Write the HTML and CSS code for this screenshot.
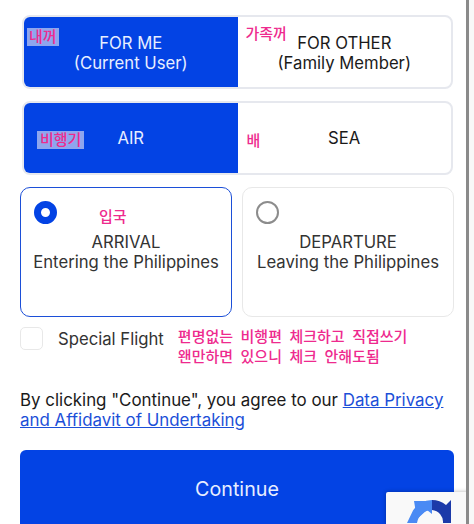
FILE: index.html
```html
<!DOCTYPE html>
<html lang="en">
<head>
    <meta charset="UTF-8">
    <meta name="viewport" content="width=device-width, initial-scale=1.0">
    <title>Registration</title>
    <link rel="stylesheet" href="styles.css">
</head>
<body>
    <div class="container">
        <div class="toggle">
            <div class="toggle-item active">
                <span class="note note-me">내꺼</span>
                FOR ME<br>(Current User)
            </div>
            <div class="toggle-item">
                <span class="note note-other">가족꺼</span>
                FOR OTHER<br>(Family Member)
            </div>
        </div>
        <div class="toggle">
            <div class="toggle-item active">
                <span class="note note-air">비행기</span>
                AIR
            </div>
            <div class="toggle-item">
                <span class="note note-sea">배</span>
                SEA
            </div>
        </div>
        <div class="cards">
            <div class="card selected">
                <span class="radio on"></span>
                <span class="note note-in">입국</span>
                <p>ARRIVAL<br>Entering the Philippines</p>
            </div>
            <div class="card">
                <span class="radio"></span>
                <p>DEPARTURE<br>Leaving the Philippines</p>
            </div>
        </div>
        <div class="special">
            <span class="checkbox"></span>
            <span class="special-label">Special Flight</span>
            <span class="note-flight">편명없는 비행편 체크하고 직접쓰기<br>왠만하면 있으니 체크 안해도됨</span>
        </div>
        <p class="agree">By clicking "Continue", you agree to our <a href="#">Data Privacy and Affidavit of Undertaking</a></p>
        <button class="continue">Continue</button>
    </div>
    <div class="recaptcha">
        <svg width="60" height="31" viewBox="0 0 60 31">
            <path d="M30 8a23 23 0 0 0-19 10.500L5 31h10a15 15 0 0 1 15-13z" fill="#4a8af4"/>
            <path d="M12 9h18v13L25 18l-10 9z" fill="#4a8af4"/>
            <path d="M30 8a23 23 0 0 1 14 5l5-5v23H41a12 12 0 0 0-11-13z" fill="#1c3aa9"/>
        </svg>
    </div>
    <div class="scrollbar"></div>
</body>
</html>
```

FILE: styles.css
```css
html, body {
    height: 100%;
}
body {
    font-family: Inter, "Noto Sans CJK KR", sans-serif;
    margin: 0;
    background-color: #fff;
    color: #222;
    overflow: hidden;
}
.container {
    width: 434px;
    padding: 15px 0 0 20px;
}
.scrollbar {
    position: absolute;
    top: 0;
    right: 0;
    bottom: 0;
    width: 5px;
    background-color: #f8f8f8;
    border-left: 3px solid #8a8a8a;
}
.toggle {
    display: flex;
    height: 74px;
    margin: 0 1px 12px 2px;
    box-sizing: border-box;
    border: 2px solid #e6e8ee;
    border-radius: 8px;
    overflow: hidden;
}
.toggle-item {
    position: relative;
    flex: 1;
    text-align: center;
    font-size: 16.7px;
    line-height: 20px;
    color: #1a1a1a;
    padding-top: 16px;
}
.toggle-item.active {
    background-color: #0343e4;
    color: #e8eeff;
}
.toggle + .toggle .toggle-item {
    padding-top: 25px;
}
.note {
    position: absolute;
    color: #ee2a8e;
    font-size: 15px;
    font-weight: 500;
    line-height: 18px;
}
.note-me {
    left: 3px;
    top: 11px;
    padding: 0 2px;
    background-color: #8ea6ee;
}
.note-other {
    left: 8px;
    top: 8px;
}
.note-air {
    left: 13px;
    top: 28px;
    padding: 0 3px;
    background-color: #8ea6ee;
}
.note-sea {
    left: 9px;
    top: 29px;
}
.cards {
    display: flex;
    gap: 10px;
}
.card {
    position: relative;
    flex: 1;
    height: 130px;
    box-sizing: border-box;
    border: 1.5px solid #e8e8e8;
    border-radius: 10px;
    color: #333;
    font-size: 16.7px;
    line-height: 20px;
    text-align: center;
}
.card.selected {
    border-color: #1c4fd8;
}
.card p {
    margin: 44px 0 0;
}
.radio {
    position: absolute;
    left: 13px;
    top: 13px;
    width: 23px;
    height: 23px;
    box-sizing: border-box;
    border: 2px solid #8c8c8c;
    border-radius: 50%;
}
.radio.on {
    border: 7px solid #0343e4;
}
.note-in {
    left: 78px;
    top: 20px;
}
.special {
    display: flex;
    align-items: flex-start;
    margin-top: 10px;
}
.checkbox {
    flex: none;
    width: 23px;
    height: 23px;
    box-sizing: border-box;
    border: 1.5px solid #e8e8e8;
    border-radius: 5px;
}
.special-label {
    margin-left: 15px;
    font-size: 16.7px;
    line-height: 24px;
    color: #333;
}
.note-flight {
    margin-left: 14px;
    color: #ee2a8e;
    font-size: 15px;
    font-weight: 500;
    line-height: 20px;
    word-spacing: 3.5px;
    white-space: nowrap;
}
.agree {
    margin: 23px 0 0;
    font-size: 16.9px;
    line-height: 20px;
    color: #1a1a1a;
}
.agree a {
    color: #1c4fd8;
}
.continue {
    display: block;
    width: 100%;
    height: 74px;
    margin-top: 20px;
    border: 0;
    border-radius: 6px 6px 0 0;
    background-color: #0343e4;
    color: #e8eeff;
    font-family: inherit;
    font-size: 19.7px;
    padding: 4px 0 0;
}
.recaptcha {
    position: absolute;
    left: 386px;
    right: 0;
    bottom: 0;
    height: 32px;
    background-color: #f9f9f9;
    border-radius: 2px 0 0 0;
    box-shadow: 0 0 4px rgba(0, 0, 0, 0.3);
    overflow: hidden;
}
.recaptcha svg {
    display: block;
    margin-left: 16px;
}
```
